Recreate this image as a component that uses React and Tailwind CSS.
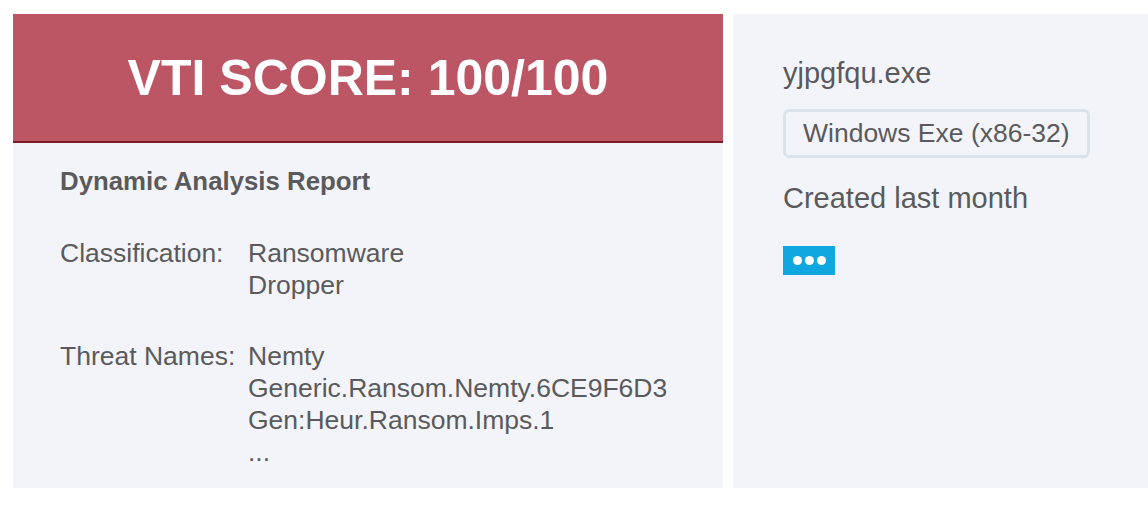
const body = { fontFamily: '"Liberation Sans", Arial, sans-serif' };

const Row = ({ label, values }) => (
  <div className="flex">
    <div className="w-[188px] shrink-0">{label}</div>
    <div className="flex flex-col">
      {values.map((v) => (
        <div key={v}>{v}</div>
      ))}
    </div>
  </div>
);

export default function App() {
  return (
    <div className="w-[1148px] h-[508px] bg-white flex gap-[10px] pt-[14px] pl-[13px]" style={body}>
      <div className="w-[710px] h-[474px] bg-[#f3f4f9] flex flex-col">
        <div className="h-[129px] bg-[#bc5665] border-b-2 border-[#7b1c27] flex items-center justify-center">
          <h1 className="text-white font-bold text-[50px] leading-none">VTI SCORE: 100/100</h1>
        </div>
        <div className="pl-[47px] pt-[22px] text-[#5a5a5c] text-[26.5px] leading-[32px]">
          <div className="font-bold text-[25.8px]">Dynamic Analysis Report</div>
          <div className="mt-[40px]">
            <Row label="Classification:" values={['Ransomware', 'Dropper']} />
          </div>
          <div className="mt-[39px]">
            <Row
              label="Threat Names:"
              values={['Nemty', 'Generic.Ransom.Nemty.6CE9F6D3', 'Gen:Heur.Ransom.Imps.1', '...']}
            />
          </div>
        </div>
      </div>

      <div className="flex-1 h-[474px] bg-[#f3f4f9] pl-[50px] pt-[43px] text-[#5a5a5c] flex flex-col items-start">
        <div className="text-[29px] leading-[32px]">yjpgfqu.exe</div>
        <div className="mt-[20px] h-[49px] px-[17px] border-[3px] border-[#dce2eb] rounded-[6px] flex items-center text-[26.5px]">
          Windows Exe (x86-32)
        </div>
        <div className="mt-[24px] text-[29px] leading-[32px]">Created last month</div>
        <button className="mt-[32px] w-[52px] h-[29px] bg-[#10a6e0] flex items-center justify-center gap-[3px]">
          <span className="w-[9px] h-[9px] rounded-full bg-white" />
          <span className="w-[9px] h-[9px] rounded-full bg-white" />
          <span className="w-[9px] h-[9px] rounded-full bg-white" />
        </button>
      </div>
    </div>
  );
}
